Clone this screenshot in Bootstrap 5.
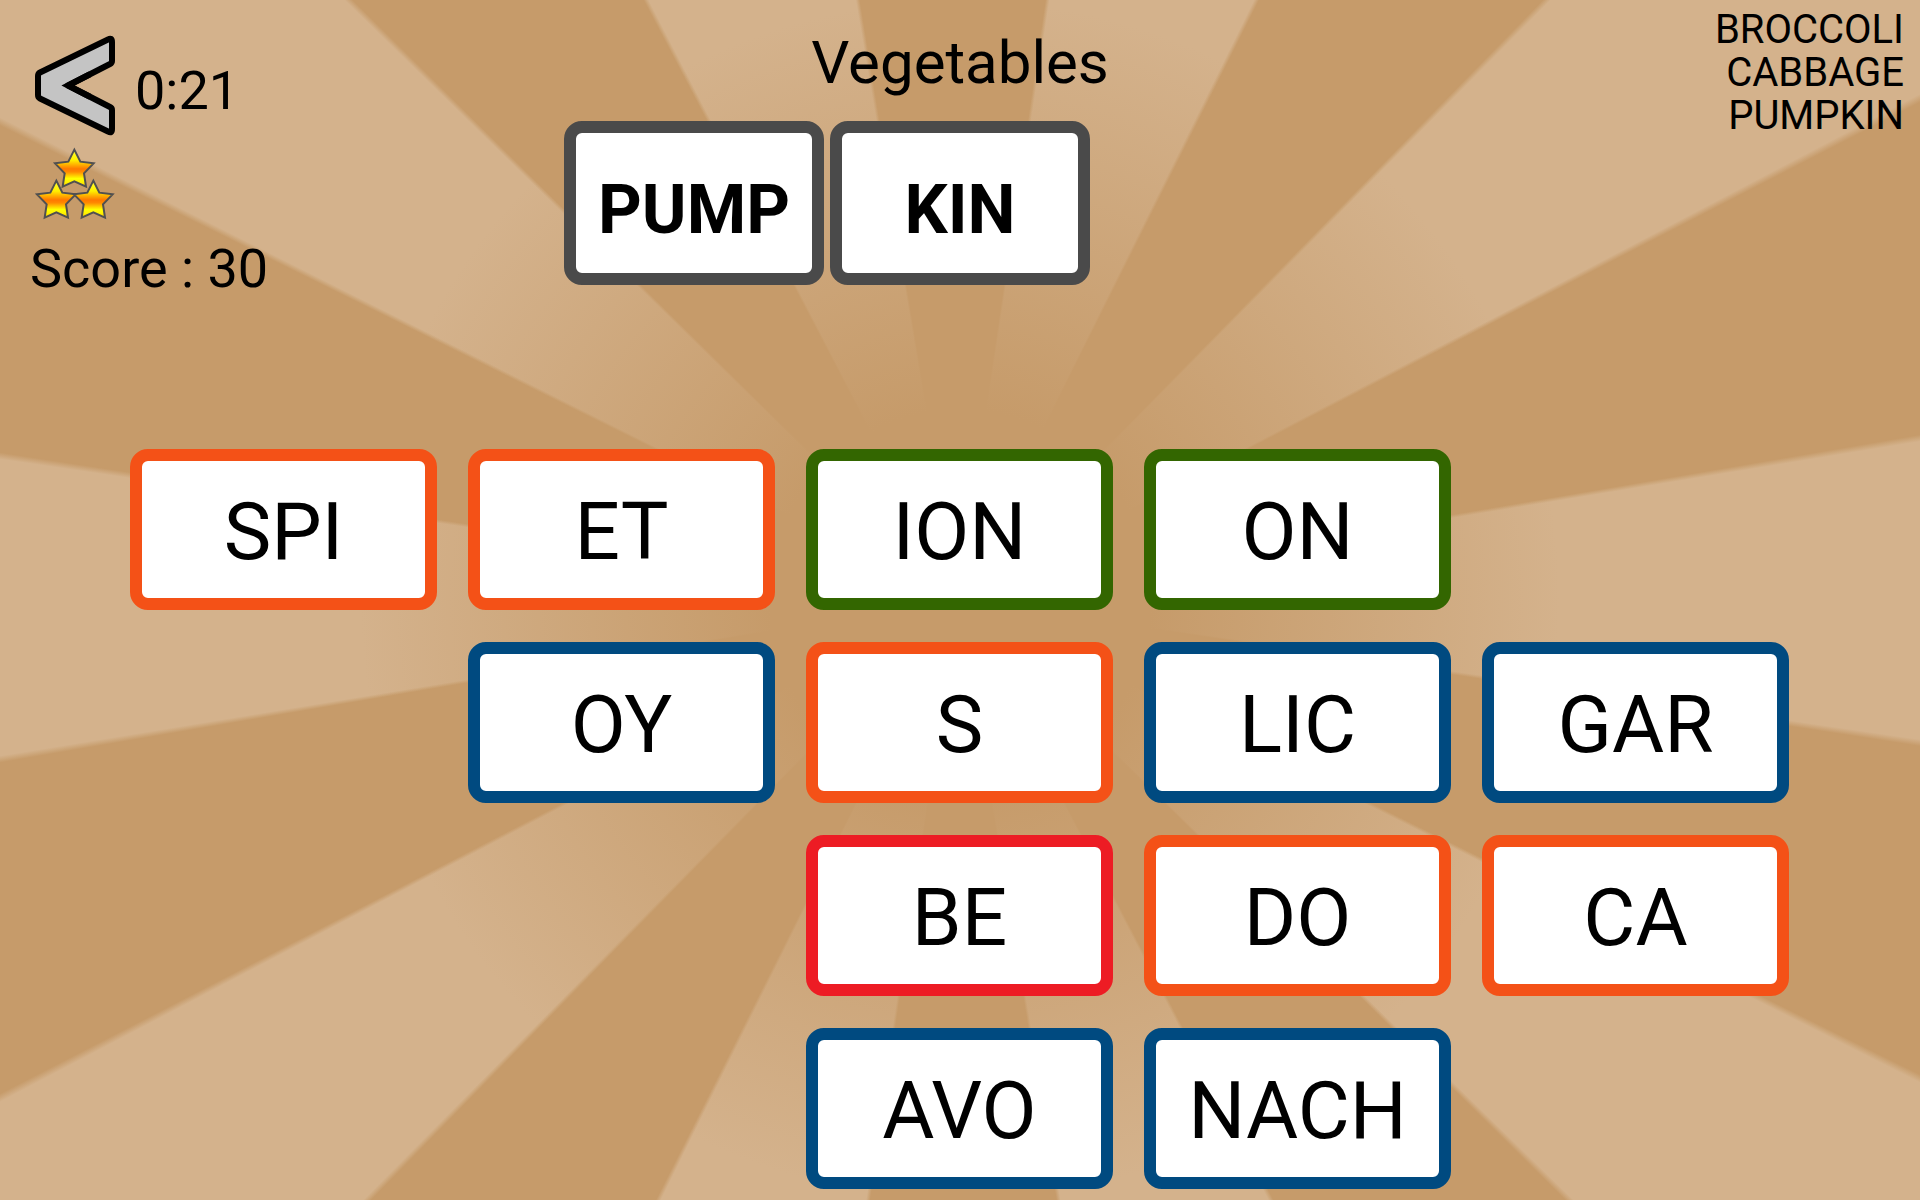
<!DOCTYPE html>
<html lang="en">
<head>
<meta charset="utf-8">
<meta name="viewport" content="width=device-width, initial-scale=1">
<title>Vegetables</title>
<link rel="stylesheet" href="https://cdn.jsdelivr.net/npm/bootstrap@5.3.0/dist/css/bootstrap.min.css">
<style>
  body {
    font-family: Roboto, "Liberation Sans", sans-serif;
    color: #000;
    background-color: #c69b6a;
    background-image:
      radial-gradient(circle at 50% 50%, #c69b6a 0, #c69b6a 190px, rgba(198, 155, 106, 0) 600px),
      repeating-conic-gradient(from 8.5deg at calc(50% - 2px) calc(50% - 1px), #cda77b 0deg, #d4b28c .2deg 17.8deg, #c69b6a 18.2deg 35.8deg, #cda77b 36deg);
  }
  .side-col { flex: 1 1 0; }
  .info-left { padding: 35px 0 0 30px; }
  .back-btn { line-height: 0; }
  .info-text { font-size: 54px; line-height: 64px; }
  .timer { padding: 10px 0 0 15px; }
  .stars { margin: 11px 0 16px 5px; }
  .theme-title { font-size: 60px; line-height: 72px; padding-top: 27px; margin-bottom: 22px; font-weight: 400; }
  .slot, .tile {
    border: 12px solid;
    border-radius: 18px;
    background: #fff;
    color: #000;
  }
  .slot { width: 260px; height: 164px; border-color: #4a4a4a; font-size: 68px; line-height: 80px; font-weight: 700; padding: 14px 0 0; }
  .slots { gap: 6px; }
  .found { font-size: 40px; line-height: 43px; padding: 8px 16px 0 0; }
  .board {
    display: grid;
    grid-template-columns: repeat(5, 1fr);
    gap: 32px 31px;
    padding: 148px 131px 10px 130px;
  }
  .tile { height: 161px; font-size: 80px; line-height: 92px; padding: 4px 0 0; }
  .c2 { grid-column-start: 2; }
  .c3 { grid-column-start: 3; }
  .tile-orange { border-color: #f45117; }
  .tile-green { border-color: #336600; }
  .tile-blue { border-color: #004a80; }
  .tile-red { border-color: #ed1c24; }
</style>
</head>
<body class="min-vh-100">
<header class="d-flex align-items-start">
  <div class="side-col">
    <div class="info-left">
      <div class="d-flex align-items-center">
        <button type="button" class="back-btn border-0 bg-transparent p-0" aria-label="Back">
          <svg width="90" height="101" viewBox="30 35 90 101" fill="none" stroke="#000" stroke-width="6">
            <path d="M108 39.500Q112 37 112 42V61Q112 63 110 64L68 85.500 110 107Q112 108 112 110V129Q112 134 108 131.500L40 98.500Q38 97.500 38 95V76Q38 73.500 40 72.500Z" fill="#c4c4c4" stroke-linejoin="round"/>
            <path d="M90 74.250L68 85.500 90 96.750" stroke-linejoin="miter"/>
          </svg>
        </button>
        <span class="info-text timer">0:21</span>
      </div>
      <svg class="stars d-block" width="80" height="74" viewBox="105 444 240 222" aria-label="Three stars" role="img">
        <defs>
          <linearGradient id="gold" x1="0" y1="0" x2="0" y2="1">
            <stop offset="0" stop-color="#ffff30"/>
            <stop offset=".28" stop-color="#fff000"/>
            <stop offset=".52" stop-color="#ff7800"/>
            <stop offset=".6" stop-color="#ff8a00"/>
            <stop offset=".78" stop-color="#ffff00"/>
            <stop offset=".88" stop-color="#fff200"/>
            <stop offset="1" stop-color="#ffc400"/>
          </linearGradient>
          <path id="star" d="M223 452L241 488 281 493 252 523 258 563 223 547 188 563 194 523 165 493 205 488Z" fill="url(#gold)" stroke="#505050" stroke-width="6"/>
        </defs>
        <use href="#star"/>
        <use href="#star" x="-54" y="93"/>
        <use href="#star" x="57" y="93"/>
      </svg>
      <div class="info-text">Score : 30</div>
    </div>
  </div>
  <div class="text-center">
    <h1 class="theme-title">Vegetables</h1>
    <div class="d-flex slots">
      <button type="button" class="slot">PUMP</button>
      <button type="button" class="slot">KIN</button>
      <div class="slot invisible"></div>
    </div>
  </div>
  <div class="side-col">
    <ul class="found list-unstyled text-end mb-0">
      <li>BROCCOLI</li>
      <li>CABBAGE</li>
      <li>PUMPKIN</li>
    </ul>
  </div>
</header>
<main class="board">
  <button type="button" class="tile tile-orange">SPI</button>
  <button type="button" class="tile tile-orange">ET</button>
  <button type="button" class="tile tile-green">ION</button>
  <button type="button" class="tile tile-green">ON</button>
  <button type="button" class="tile tile-blue c2">OY</button>
  <button type="button" class="tile tile-orange">S</button>
  <button type="button" class="tile tile-blue">LIC</button>
  <button type="button" class="tile tile-blue">GAR</button>
  <button type="button" class="tile tile-red c3">BE</button>
  <button type="button" class="tile tile-orange">DO</button>
  <button type="button" class="tile tile-orange">CA</button>
  <button type="button" class="tile tile-blue c3">AVO</button>
  <button type="button" class="tile tile-blue">NACH</button>
</main>
<script src="https://cdn.jsdelivr.net/npm/bootstrap@5.3.0/dist/js/bootstrap.bundle.min.js"></script>
</body>
</html>
